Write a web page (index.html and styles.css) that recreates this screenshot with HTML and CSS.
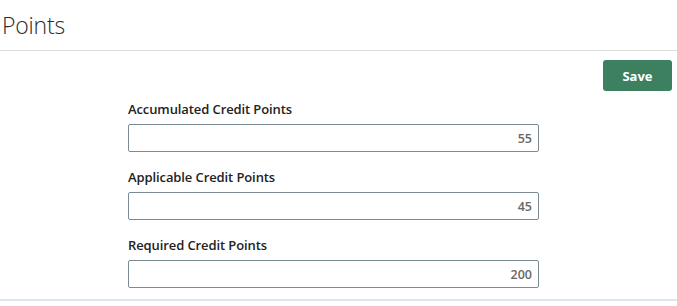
FILE: index.html
```html
<!DOCTYPE html>
<html lang="en">
<head>
    <meta charset="UTF-8">
    <meta name="viewport" content="width=device-width, initial-scale=1.0">
    <title>Points</title>
    <link rel="stylesheet" href="styles.css">
</head>
<body>
    <div class="page-header">
        <h1>Points</h1>
    </div>
    <div class="toolbar">
        <button class="btn-save">Save</button>
    </div>
    <div class="points-form">
        <div class="form-group">
            <label for="accumulated">Accumulated Credit Points</label>
            <input type="text" id="accumulated" value="55" readonly>
        </div>
        <div class="form-group">
            <label for="applicable">Applicable Credit Points</label>
            <input type="text" id="applicable" value="45" readonly>
        </div>
        <div class="form-group">
            <label for="required">Required Credit Points</label>
            <input type="text" id="required" value="200" readonly>
        </div>
    </div>
    <div class="page-footer"></div>
</body>
</html>
```

FILE: styles.css
```css
body {
    font-family: "Open Sans", "Noto Sans", Arial, sans-serif;
    margin: 0;
    padding: 0;
    background-color: #fff;
    color: #222;
}

.page-header {
    height: 51px;
    border-bottom: 1px solid #dedede;
    box-sizing: border-box;
    padding: 0 2px;
}

.page-header h1 {
    margin: 0;
    font-size: 23px;
    font-weight: 300;
    line-height: 50px;
    color: #2b2b2b;
    letter-spacing: -0.2px;
}

.toolbar {
    display: flex;
    justify-content: flex-end;
    padding: 9px 5px 0 0;
}

.btn-save {
    width: 69px;
    height: 31px;
    font-family: inherit;
    font-size: 13px;
    font-weight: 700;
    color: #fff;
    background-color: #3d805f;
    border: none;
    border-radius: 3px;
    cursor: pointer;
}

.points-form {
    width: 411px;
    margin: 9px 0 0 128px;
}

.form-group {
    margin-bottom: 16px;
}

.form-group label {
    display: block;
    font-size: 13px;
    font-weight: 600;
    line-height: 18px;
    margin-bottom: 6px;
    letter-spacing: -0.1px;
}

.form-group input {
    display: block;
    width: 100%;
    height: 28px;
    padding: 0 6px;
    font-family: inherit;
    font-size: 12.5px;
    font-weight: 600;
    color: #666;
    text-align: right;
    border: 1px solid #7b8c96;
    border-radius: 2px;
    box-sizing: border-box;
    outline: none;
}

.page-footer {
    margin-top: -5px;
    border-top: 2px solid #dfe5ec;
}
```
